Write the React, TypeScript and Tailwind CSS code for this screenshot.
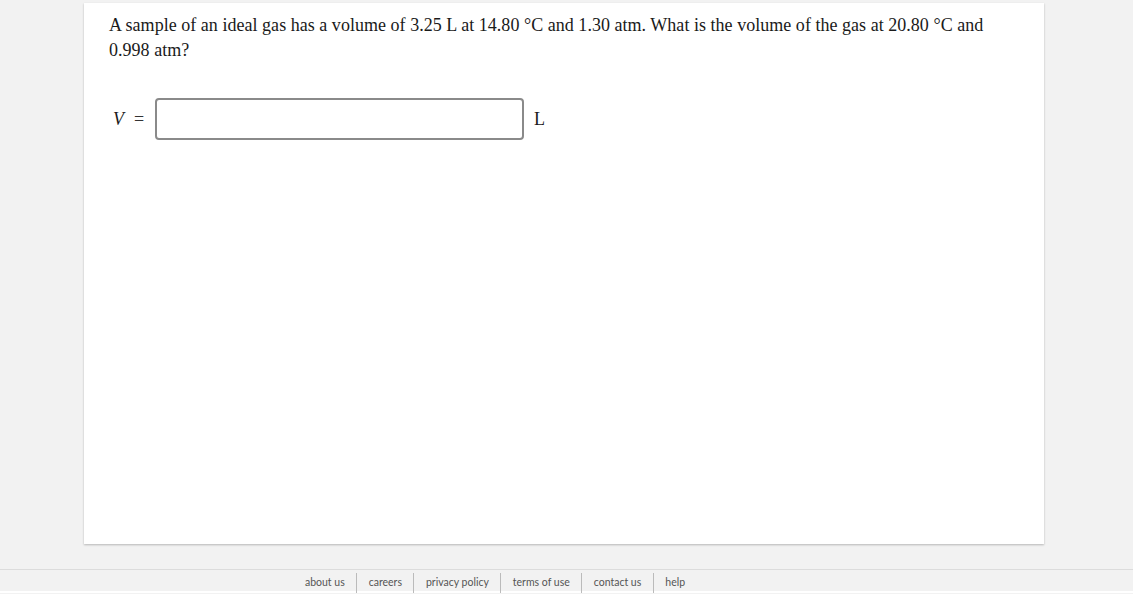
import React from 'react';

const links = ['about us', 'careers', 'privacy policy', 'terms of use', 'contact us', 'help'];

export default function App() {
  return (
    <div className="w-[1133px] h-[594px] bg-[#f2f2f2] flex flex-col overflow-hidden">
      <div className="pt-[3px] pl-[84px]">
        <div className="w-[960px] h-[541px] bg-white shadow-[0_1px_2px_rgba(0,0,0,0.25)] pl-[25px] pr-[30px] pt-[10px] font-['Liberation_Serif',serif] text-[#1a1a1a]">
          <p className="text-[18px] leading-[25px] tracking-[0.03px]">
            A sample of an ideal gas has a volume of 3.25 L at 14.80 °C and 1.30 atm. What is the volume of the gas at 20.80 °C and
            <br />
            0.998 atm?
          </p>
          <div className="mt-[35px] flex items-center h-[42px]">
            <span className="text-[18px] ml-[4px] w-[42px] flex items-center">
              <i>V</i>
              <span className="ml-[10px] text-[#333]">=</span>
            </span>
            <div className="w-[369px] h-[42px] border-2 border-[#8a8a8a] rounded-[4px] bg-white" />
            <span className="text-[18px] ml-[10px]">L</span>
          </div>
        </div>
      </div>
      <div className="mt-[25px] h-[24px] pt-[4px] border-t border-[#dcdcdc] bg-[#f2f2f2] border-b-2 border-b-white flex items-center justify-center pr-[143px] font-['Lato',sans-serif] text-[10.5px] text-[#555]">
        {links.map((l, i) => (
          <React.Fragment key={l}>
            {i > 0 && <span className="w-px h-[20px] bg-[#bbb] mx-[11.5px]" />}
            <span>{l}</span>
          </React.Fragment>
        ))}
      </div>
    </div>
  );
}
